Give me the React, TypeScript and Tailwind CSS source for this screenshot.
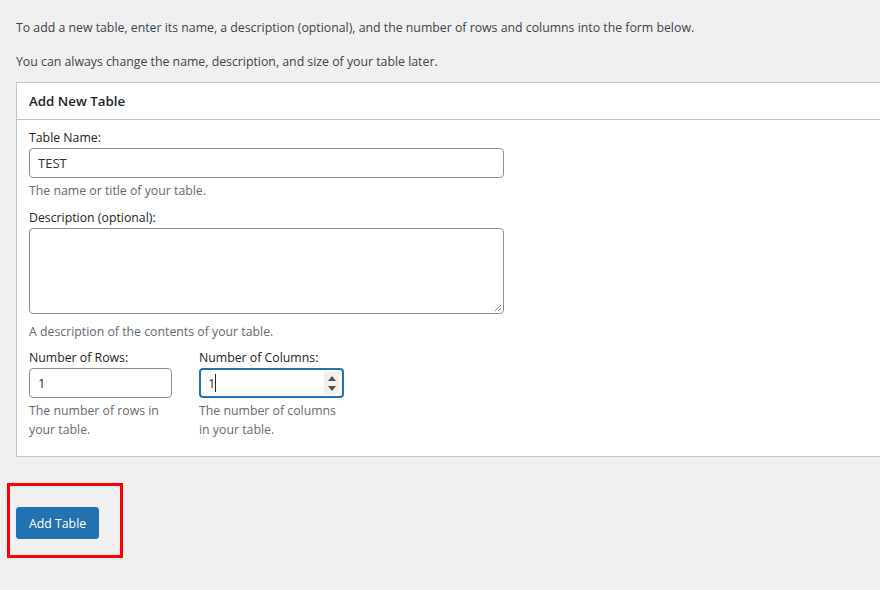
import React from "react";

const font = { fontFamily: '"Open Sans", "Noto Sans", sans-serif' };

export default function App() {
  return (
    <div
      className="w-[880px] h-[590px] bg-[#f0f0f1] overflow-hidden text-[12.3px] leading-[19px] text-[#3c434a]"
      style={font}
    >
      <div className="pl-4 pt-[18px]">
        <p className="mb-[15px]">
          To add a new table, enter its name, a description (optional), and the number of rows and columns into the form below.
        </p>
        <p className="mb-[11px]">You can always change the name, description, and size of your table later.</p>

        {/* Postbox */}
        <div className="w-[900px] bg-white border border-[#c3c4c7]">
          <div className="h-[37px] px-3 flex items-center border-b border-[#c3c4c7]">
            <h2 className="text-[13.3px] font-semibold text-[#1d2327]">Add New Table</h2>
          </div>
          <div className="px-3 pt-[8px] pb-[17px]">
            <label className="block text-[#1d2327]">Table Name:</label>
            <input
              readOnly
              value="TEST"
              className="mt-[1px] block w-[475px] h-[30px] px-2 border border-[#8c8f94] rounded-[4px] text-[13px] text-[#2c3338] outline-none"
            />
            <p className="mt-[3px] text-[#646970]">The name or title of your table.</p>

            <label className="block mt-[8px] text-[#1d2327]">Description (optional):</label>
            <div className="relative mt-[1px] w-[475px] h-[86px] border border-[#8c8f94] rounded-[4px]">
              <svg className="absolute right-[1px] bottom-[1px]" width="8" height="8" viewBox="0 0 8 8">
                <path d="M7 1 L1 7 M7 4 L4 7" stroke="#8c8f94" strokeWidth="1" />
              </svg>
            </div>
            <p className="mt-[8px] text-[#646970]">A description of the contents of your table.</p>

            <div className="flex gap-[26px] mt-[7px]">
              <div className="w-[144px]">
                <label className="block text-[#1d2327]">Number of Rows:</label>
                <div className="mt-[1px] w-[143px] h-[30px] px-2 flex items-center border border-[#8c8f94] rounded-[4px] text-[13px] text-[#2c3338] bg-white">
                  1
                </div>
                <p className="mt-[3px] text-[#646970]">The number of rows in your table.</p>
              </div>
              <div className="w-[146px]">
                <label className="block text-[#1d2327]">Number of Columns:</label>
                <div className="relative mt-[1px] w-[145px] h-[30px] pl-2 flex items-center border-2 border-[#2271b1] rounded-[4px] text-[13px] text-[#2c3338] bg-white">
                  <span className="-ml-[1px]">1</span>
                  <span className="inline-block w-px h-[18px] bg-[#1d2327]" />
                  <div className="absolute right-[3px] top-[2px] bottom-[2px] w-[15px] flex flex-col items-center justify-center gap-[5px] bg-[#f0f0f0]">
                    <svg width="8" height="5" viewBox="0 0 8 5"><path d="M4 0 L8 5 L0 5 Z" fill="#505050" /></svg>
                    <svg width="8" height="5" viewBox="0 0 8 5"><path d="M0 0 L8 0 L4 5 Z" fill="#505050" /></svg>
                  </div>
                </div>
                <p className="mt-[3px] text-[#646970]">The number of columns in your table.</p>
              </div>
            </div>
          </div>
        </div>

        {/* Submit */}
        <div className="relative mt-[50px]">
          <button className="h-[32px] px-3 bg-[#2271b1] border border-[#2271b1] rounded-[3px] text-white text-[12.3px]">
            Add Table
          </button>
          <div className="absolute -left-[9px] -top-[24px] w-[116px] h-[75px] border-[3px] border-[#ff0000]" />
        </div>
      </div>
    </div>
  );
}
